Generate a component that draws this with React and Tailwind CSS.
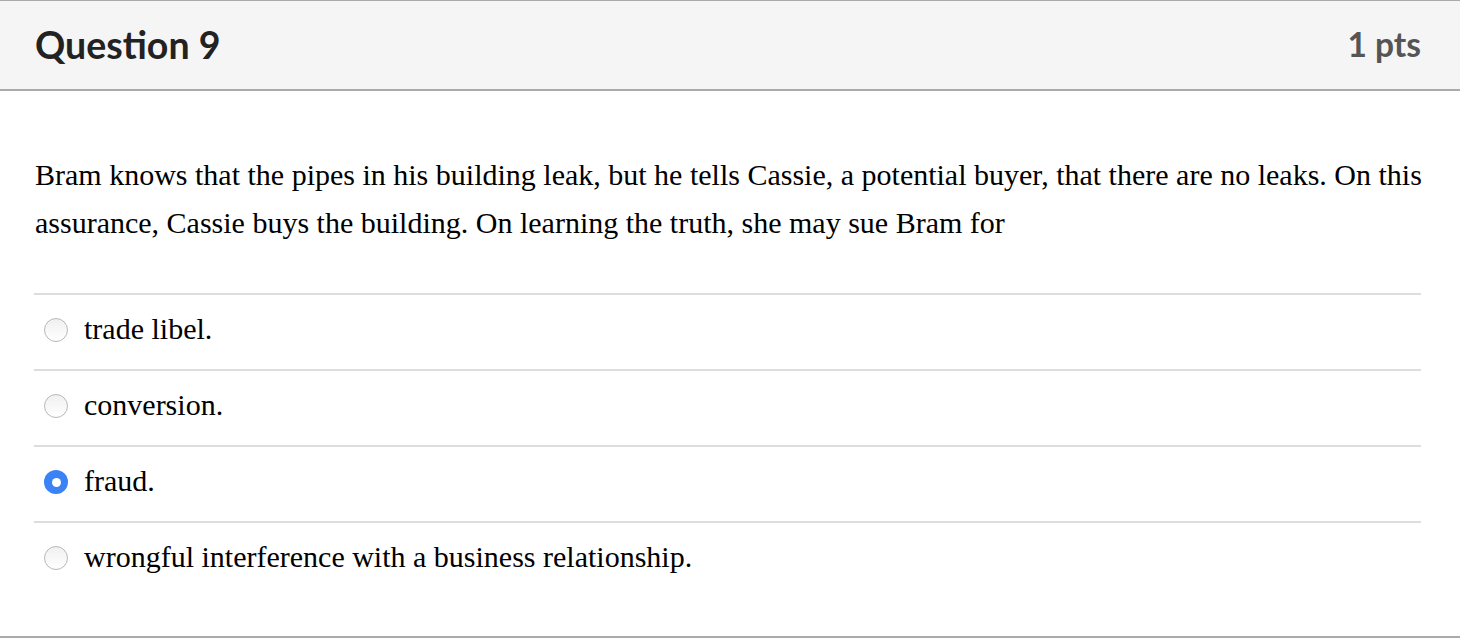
export default function App() {
  const answers = [
    { text: "trade libel.", checked: false },
    { text: "conversion.", checked: false },
    { text: "fraud.", checked: true },
    { text: "wrongful interference with a business relationship.", checked: false },
  ];
  return (
    <div className="w-[1460px] h-[644px] bg-white overflow-hidden">
      <div className="border-t-2 border-b-2 border-[#aaaaaa] mt-[-1px]">
        <div className="h-[90px] bg-[#f5f5f5] border-b-2 border-[#aaaaaa] flex items-center justify-between pl-[35px] pr-[39px]" style={{ fontFamily: "Lato, sans-serif" }}>
          <h2 className="text-[37.5px] font-bold text-[#222222] leading-none">Question 9</h2>
          <div className="text-[33.5px] font-bold text-[#555555] leading-none">1 pts</div>
        </div>
        <div className="px-[35px] pt-[60px] pb-[2px]" style={{ fontFamily: '"Liberation Serif", "Times New Roman", serif' }}>
          <p className="text-[30px] leading-[48px] text-black">
            Bram knows that the pipes in his building leak, but he tells Cassie, a potential buyer, that there are no leaks. On this assurance, Cassie buys the building. On learning the truth, she may sue Bram for
          </p>
          <div className="mt-[46px] mr-[4px] ml-[-1px]">
            {answers.map((a, i) => (
              <div key={i} className="h-[76px] border-t-2 border-[#dddddd] flex items-center pb-[4px]">
                <span className="w-[44px] flex justify-center">
                  {a.checked ? (
                    <span className="w-[24px] h-[24px] rounded-full bg-[#3b82f6] flex items-center justify-center">
                      <span className="w-[9px] h-[9px] rounded-full bg-white" />
                    </span>
                  ) : (
                    <span className="w-[24px] h-[24px] rounded-full border border-[#b8b8b8] bg-gradient-to-b from-[#f0f0f0] to-white" />
                  )}
                </span>
                <span className="text-[30px] leading-[48px] text-black ml-[6px] mb-[2px]">{a.text}</span>
              </div>
            ))}
          </div>
          <div className="h-[37px]" />
        </div>
      </div>
    </div>
  );
}
